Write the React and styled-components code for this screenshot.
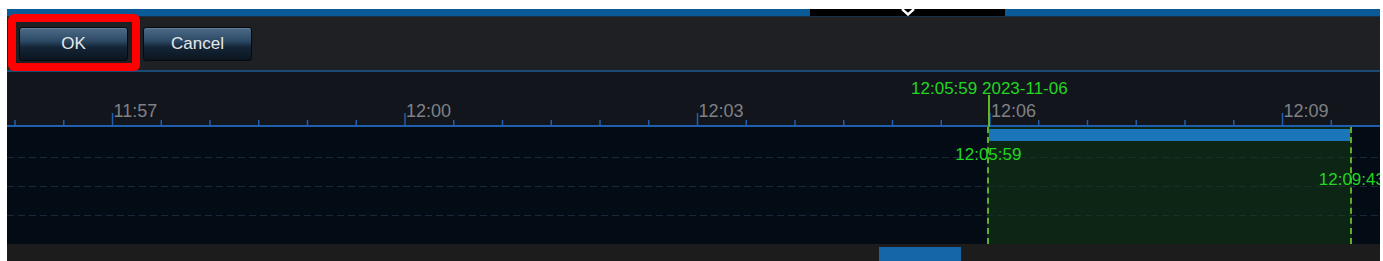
import React from "react";
import styled, { createGlobalStyle } from "styled-components";

const Global = createGlobalStyle`
  html, body { margin: 0; padding: 0; background: #ffffff; }
  body { font-family: "Liberation Sans", Arial, sans-serif; }
  #root { padding: 9px 3px 0 7px; }
`;

const PX_PER_SEC = 1.625;
const ORIGIN_X = 105.5; // x of 11:57:00 inside the panel
const ORIGIN_SEC = 11 * 3600 + 57 * 60;
const xOf = (h, m, s = 0) => ORIGIN_X + (h * 3600 + m * 60 + s - ORIGIN_SEC) * PX_PER_SEC;

const Panel = styled.div`
  width: 1373px;
  display: flex;
  flex-direction: column;
  overflow: hidden;
  background: #1f2024;
`;

const TopBar = styled.div`
  height: 7px;
  display: flex;
  background: #0a5a97;
  border-bottom: 1px solid #17324a;
`;

const TopHandle = styled.div`
  margin-left: 803px;
  width: 195px;
  background: #000;
  display: flex;
  justify-content: center;
`;

const Toolbar = styled.div`
  position: relative;
  height: 55px;
  box-sizing: border-box;
  padding: 10px 0 0 12px;
  display: flex;
  gap: 15px;
  align-items: flex-start;
  background: #1f2024;
  border-bottom: 2px solid #1b4a76;
`;

const Button = styled.button`
  width: 109px;
  height: 34px;
  border: 1px solid #07090c;
  border-radius: 3px;
  background: linear-gradient(#4d6b88 0%, #2d4a66 40%, #142536 60%, #0b151f 100%);
  color: #e6e8ea;
  font-family: "Liberation Sans", Arial, sans-serif;
  font-size: 17px;
  padding: 0;
  box-shadow: inset 0 1px 0 rgba(255,255,255,0.12);
`;

const Highlight = styled.div`
  position: absolute;
  left: 1px;
  top: -3px;
  width: 132px;
  height: 57px;
  box-sizing: border-box;
  border: 8px solid #ff0000;
  border-radius: 6px;
  pointer-events: none;
`;

const Ruler = styled.div`
  position: relative;
  height: 55px;
  background: #12151c;
`;

const TickSvg = styled.svg`
  position: absolute;
  left: 0;
  bottom: 0;
  display: block;
`;

const TimeLabel = styled.span`
  position: absolute;
  top: 30px;
  font-size: 18px;
  line-height: 18px;
  color: #7f8186;
  white-space: nowrap;
`;

const GreenLabel = styled.span`
  position: absolute;
  transform: translateX(-50%);
  font-size: 17px;
  line-height: 18px;
  color: #22d622;
  white-space: nowrap;
  z-index: 2;
`;

const CursorLine = styled.div`
  position: absolute;
  top: 23px;
  bottom: 0;
  width: 2px;
  background: #64b52a;
`;

const Tracks = styled.div`
  position: relative;
  height: 117px;
  display: flex;
  flex-direction: column;
  background: #030b15;
`;

const TrackRow = styled.div`
  height: ${(p) => (p.$first ? 30 : 29)}px;
  flex: none;
  box-sizing: border-box;
  background: ${(p) =>
    p.$first
      ? "none"
      : "repeating-linear-gradient(90deg, #1a2739 0 7px, transparent 7px 11px) top / 100% 1px no-repeat"};
`;

const Selection = styled.div`
  position: absolute;
  top: 0;
  bottom: 0;
  background: rgba(20, 60, 20, 0.55);
  border-left: 2px dashed #5fae28;
  border-right: 2px dashed #5fae28;
`;

const RecordBar = styled.div`
  margin-top: 2px;
  height: 12px;
  background: #1a75b9;
`;

const ScrollBar = styled.div`
  height: 17px;
  box-sizing: border-box;
  padding-top: 3px;
  display: flex;
  background: #1c1c1d;
`;

const Thumb = styled.div`
  flex: none;
  background: #1565a9;
`;

const majors = [
  { label: "11:57", x: xOf(11, 57) },
  { label: "12:00", x: xOf(12, 0) },
  { label: "12:03", x: xOf(12, 3) },
  { label: "12:06", x: xOf(12, 6) },
  { label: "12:09", x: xOf(12, 9) },
];

const ticks = [];
for (let i = -3; i < 30; i++) {
  const x = ORIGIN_X + i * 48.75;
  if (x > 0 && x < 1373) ticks.push({ x, major: i % 6 === 0 });
}

const selStart = xOf(12, 5, 59);
const selEnd = xOf(12, 9, 43) - 1.5;

export default function App() {
  return (
    <>
      <Global />
      <Panel>
        <TopBar>
          <TopHandle>
            <svg width="14" height="7" viewBox="0 0 14 7">
              <path d="M1 0 L7 5.5 L13 0" fill="none" stroke="#ffffff" strokeWidth="2.4" />
            </svg>
          </TopHandle>
        </TopBar>
        <Toolbar>
          <Button>OK</Button>
          <Button>Cancel</Button>
          <Highlight />
        </Toolbar>
        <Ruler>
          <TickSvg width="1373" height="16" viewBox="0 0 1373 16">
            {ticks.map((t, i) => (
              <line
                key={i}
                x1={t.x}
                x2={t.x}
                y1={t.major ? 2 : 9}
                y2={15}
                stroke="#1f5fae"
                strokeWidth="1.5"
              />
            ))}
            <line x1="0" x2="1373" y1="15" y2="15" stroke="#1f5fae" strokeWidth="2" />
          </TickSvg>
          {majors.map((m) => (
            <TimeLabel key={m.label} style={{ left: m.x + 1 }}>
              {m.label}
            </TimeLabel>
          ))}
          <GreenLabel style={{ left: selStart + 1, top: 8 }}>12:05:59 2023-11-06</GreenLabel>
          <CursorLine style={{ left: selStart }} />
        </Ruler>
        <Tracks>
          <TrackRow $first />
          <TrackRow />
          <TrackRow />
          <TrackRow />
          <Selection style={{ left: selStart - 1, width: selEnd - selStart - 2 }}>
            <RecordBar />
          </Selection>
          <GreenLabel style={{ left: selStart, top: 19 }}>12:05:59</GreenLabel>
          <GreenLabel style={{ left: selEnd + 1, top: 44 }}>12:09:43</GreenLabel>
        </Tracks>
        <ScrollBar>
          <Thumb style={{ marginLeft: 872, width: 82 }} />
        </ScrollBar>
      </Panel>
    </>
  );
}
